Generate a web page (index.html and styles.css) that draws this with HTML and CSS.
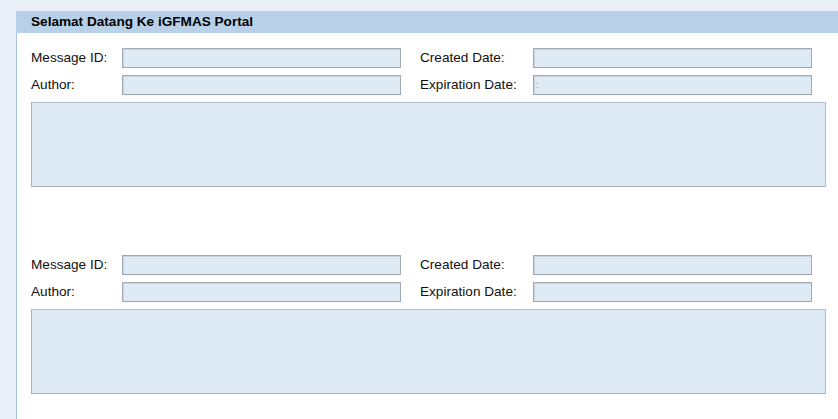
FILE: index.html
```html
<!DOCTYPE html>
<html>
<head>
<meta charset="utf-8">
<link rel="stylesheet" href="styles.css">
</head>
<body>
<div class="panel">
  <div class="panel-head">Selamat Datang Ke iGFMAS Portal</div>
  <div class="panel-body">
    <div class="msg">
      <div class="grid">
        <label class="lbl">Message ID:</label><div class="field"></div>
        <label class="lbl lbl-r">Created Date:</label><div class="field"></div>
        <label class="lbl">Author:</label><div class="field"></div>
        <label class="lbl lbl-r">Expiration Date:</label><div class="field"><span class="cur">:</span></div>
      </div>
      <div class="area"></div>
    </div>
    <div class="msg">
      <div class="grid">
        <label class="lbl">Message ID:</label><div class="field"></div>
        <label class="lbl lbl-r">Created Date:</label><div class="field"></div>
        <label class="lbl">Author:</label><div class="field"></div>
        <label class="lbl lbl-r">Expiration Date:</label><div class="field"></div>
      </div>
      <div class="area"></div>
    </div>
  </div>
</div>
</body>
</html>
```
FILE: styles.css
```css
html, body {
  margin: 0;
  padding: 0;
  height: 100%;
  overflow: hidden;
}
body {
  background: #e9eff6;
  font-family: "Liberation Sans", Arial, sans-serif;
  font-size: 13.6px;
  color: #111;
}
.panel {
  margin: 11px 0 0 16px;
  background: #fff;
  min-height: 420px;
  border-left: 1px solid #a9c5e2;
}
.panel-head {
  height: 22px;
  line-height: 22px;
  background: #b8d0e8;
  font-weight: bold;
  font-size: 13.6px;
  margin-left: -1px;
  padding-left: 15px;
  color: #000;
}
.panel-body {
  padding: 15px 0 0 14px;
  display: flex;
  flex-direction: column;
  gap: 68px;
}
.msg {
  display: flex;
  flex-direction: column;
  gap: 7px;
}
.grid {
  display: grid;
  grid-template-columns: 91px 279px 132px 279px;
  row-gap: 7px;
}
.lbl {
  height: 20px;
  line-height: 20px;
  white-space: nowrap;
}
.lbl-r {
  padding-left: 19px;
}
.field {
  box-sizing: border-box;
  height: 20px;
  background: #deeaf4;
  border: 1px solid #a3abb6;
  border-bottom-color: #9aa3ad;
  box-shadow: inset 1px 1px 0 #c9d3dd;
}
.cur {
  font-size: 9px;
  color: #8a8f96;
  line-height: 16px;
  padding-left: 2px;
}
.area {
  box-sizing: border-box;
  width: 795px;
  height: 85px;
  background: #deeaf4;
  border: 1px solid #b5bec8;
  border-left-color: #a8b0ba;
  border-bottom-color: #a9b1bb;
}
```
